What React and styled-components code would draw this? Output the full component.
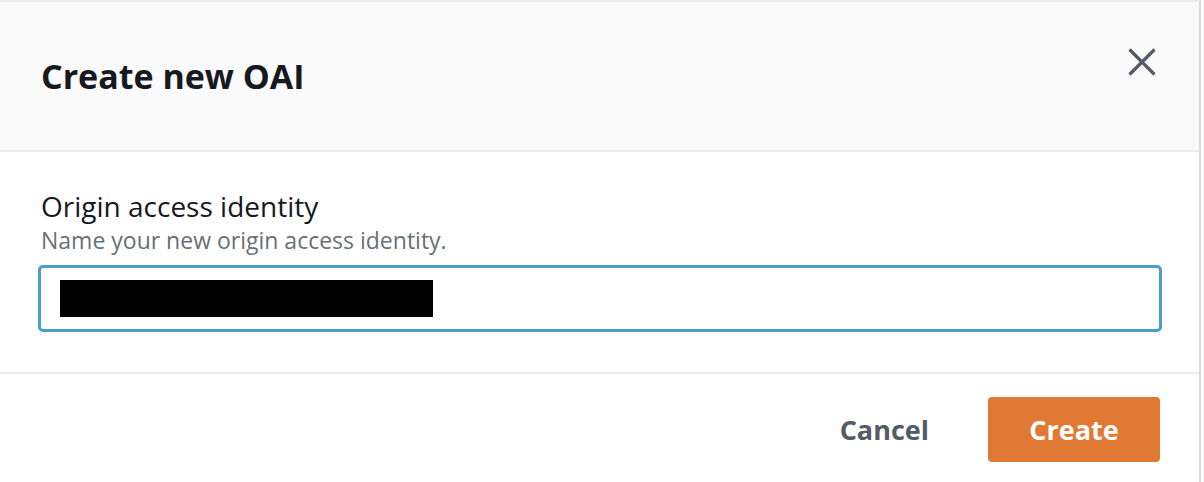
import React from "react";
import styled, { createGlobalStyle } from "styled-components";

const GlobalStyle = createGlobalStyle`
  html, body {
    margin: 0;
    padding: 0;
    background: #ffffff;
  }
  body {
    font-family: "Open Sans", "Noto Sans", Arial, sans-serif;
    color: #16191f;
  }
`;

const Modal = styled.div`
  width: 1199px;
  height: 480px;
  border-top: 2px solid #eaeded;
  border-right: 2px solid #d5dbdb;
  background: #ffffff;
  display: flex;
  flex-direction: column;
`;

const Header = styled.div`
  height: 148px;
  background: #fafafa;
  border-bottom: 2px solid #eaeded;
  display: flex;
  justify-content: space-between;
  align-items: flex-start;
  padding: 0 42px 0 41px;
`;

const Title = styled.h2`
  margin: 0;
  align-self: center;
  font-size: 34px;
  font-weight: 700;
  line-height: 44px;
  color: #16191f;
`;

const CloseButton = styled.button`
  margin-top: 45px;
  padding: 0;
  width: 30px;
  height: 30px;
  border: none;
  background: none;
  display: flex;
  align-items: center;
  justify-content: center;
  cursor: pointer;
`;

const Body = styled.div`
  padding: 36px 37px 40px 38px;
  border-bottom: 2px solid #eaeded;
  display: flex;
  flex-direction: column;
`;

const Label = styled.label`
  padding-left: 3px;
  font-size: 28px;
  line-height: 36px;
  color: #16191f;
`;

const Description = styled.div`
  padding-left: 3px;
  font-size: 23px;
  line-height: 32px;
  color: #687078;
  margin-bottom: 9px;
`;

const InputBox = styled.div`
  height: 61px;
  border: 3px solid #45a1c9;
  border-radius: 5px;
  display: flex;
  align-items: center;
  padding-left: 19px;
`;

const Redacted = styled.div`
  width: 373px;
  height: 37px;
  background: #000000;
`;

const Footer = styled.div`
  flex: 1;
  display: flex;
  justify-content: flex-end;
  align-items: flex-start;
  padding: 23px 39px 0 0;
  gap: 27px;
`;

const Button = styled.button`
  height: 65px;
  padding: 0 ${(p) => (p.$primary ? "0" : "32px")};
  width: ${(p) => (p.$primary ? "172px" : "auto")};
  border: none;
  border-radius: 4px;
  background: ${(p) => (p.$primary ? "#df7934" : "transparent")};
  color: ${(p) => (p.$primary ? "#ffffff" : "#545b64")};
  font-family: "Open Sans", "Noto Sans", Arial, sans-serif;
  font-size: 27px;
  font-weight: 700;
  cursor: pointer;
`;

export default function App() {
  return (
    <>
      <GlobalStyle />
      <Modal>
        <Header>
          <Title>Create new OAI</Title>
          <CloseButton aria-label="Close">
            <svg width="28" height="28" viewBox="0 0 28 28">
              <path
                d="M1.5 1.5 L26.5 26.5 M26.5 1.5 L1.5 26.5"
                stroke="#545b64"
                strokeWidth="3.2"
                fill="none"
              />
            </svg>
          </CloseButton>
        </Header>
        <Body>
          <Label>Origin access identity</Label>
          <Description>Name your new origin access identity.</Description>
          <InputBox>
            <Redacted />
          </InputBox>
        </Body>
        <Footer>
          <Button>Cancel</Button>
          <Button $primary>Create</Button>
        </Footer>
      </Modal>
    </>
  );
}
